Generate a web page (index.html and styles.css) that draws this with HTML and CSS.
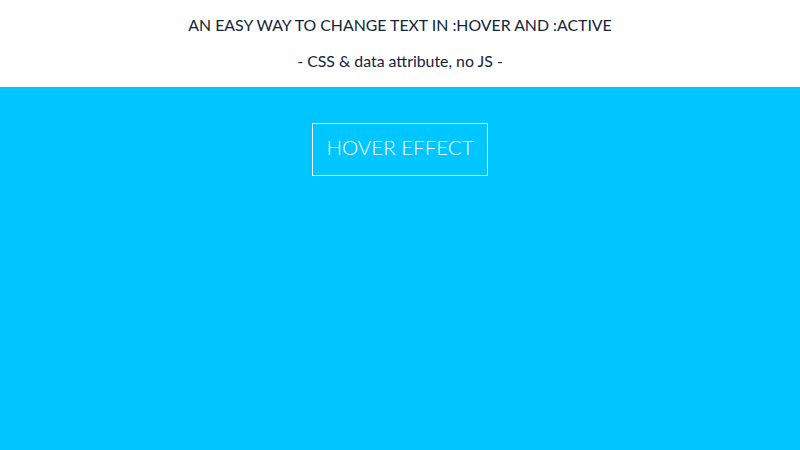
FILE: index.html
```html
<!DOCTYPE html>
<html lang="en">
<head>
<meta charset="utf-8">
<title>Text change on hover</title>
<link rel="stylesheet" href="styles.css">
</head>
<body>
  <header class="intro">
    <h1 class="intro-title">AN EASY WAY TO CHANGE TEXT IN :HOVER AND :ACTIVE</h1>
    <p class="intro-sub">- CSS &amp; data attribute, no JS -</p>
  </header>
  <main class="stage">
    <a class="swap-btn" href="#" data-hover="CLICK ME" data-active="I'M ACTIVE"><span>HOVER EFFECT</span></a>
  </main>
</body>
</html>
```
FILE: styles.css
```css
html, body {
  margin: 0;
  height: 100%;
}

body {
  font-family: Lato, "Open Sans", sans-serif;
  display: flex;
  flex-direction: column;
  background: #00c6ff;
}

.intro {
  background: #ffffff;
  color: #10243c;
  text-align: center;
  padding: 14px 0 15px;
}

.intro-title {
  margin: 0;
  font-size: 15.85px;
  font-weight: 400;
  line-height: 22px;
}

.intro-sub {
  margin: 14px 0 0;
  font-size: 15.85px;
  line-height: 22px;
}

.stage {
  flex: 1;
  display: flex;
  justify-content: center;
  align-items: flex-start;
  padding-top: 36px;
}

.swap-btn {
  display: block;
  box-sizing: border-box;
  width: 176px;
  height: 53px;
  border: 1px solid #ffffff;
  color: #ffffff;
  text-decoration: none;
  font-size: 20.5px;
  font-weight: 300;
  line-height: 47px;
  text-align: center;
}

.swap-btn:hover span,
.swap-btn:active span {
  display: none;
}

.swap-btn:hover::before {
  content: attr(data-hover);
}

.swap-btn:active::before {
  content: attr(data-active);
}
```
